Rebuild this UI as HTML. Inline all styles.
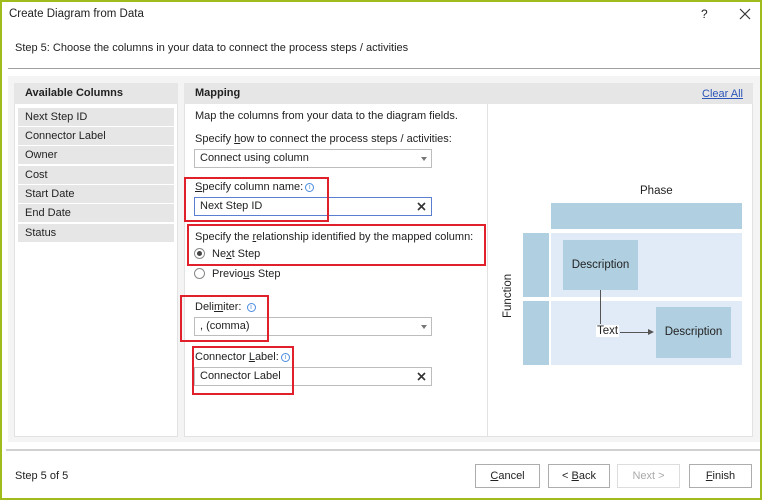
<!DOCTYPE html>
<html><head><style>
*{margin:0;padding:0;box-sizing:border-box}
body{width:768px;height:501px;background:#fff;font-family:"Liberation Sans",sans-serif;font-size:11px;color:#222;position:relative;overflow:hidden}
.a{position:absolute}
.win{left:0;top:0;width:762px;height:500px;border:2px solid #9fbb1c;background:#fff}
.item{position:absolute;left:18px;width:156px;height:18px;background:#e6e6e6;padding-left:7px;line-height:18px}
.hdr{background:#e6e6e6;font-weight:bold;height:21px;line-height:21px}
.inp{position:absolute;background:#fff;border:1px solid #bdbdbd;height:19px;line-height:17px;padding-left:5px}
.red{position:absolute;border:2px solid #e0202a}
.btn{position:absolute;top:464px;height:24px;border:1px solid #adadad;background:#fff;text-align:center;line-height:22px}
.dd{position:absolute;right:4px;top:7px;border-left:3px solid transparent;border-right:3px solid transparent;border-top:4px solid #777}
.x{position:absolute;right:5px;top:4px}
.info{display:inline-block;width:9px;height:9px;border:1px solid #4a8be0;border-radius:50%;font-size:7px;line-height:7px;text-align:center;color:#4a8be0;vertical-align:1px;margin-left:2px}
.bx{position:absolute;background:#b0cfe0}
.lt{position:absolute;background:#e1ebf8}
</style></head><body>
<div class="a win"></div>
<div class="a" style="left:9px;top:8px;font-size:11.5px">Create Diagram from Data</div>
<div class="a" style="left:701px;top:7px;font-size:12px">?</div>
<svg class="a" style="left:739px;top:8px" width="12" height="12"><path d="M1 1L11 11M11 1L1 11" stroke="#333" stroke-width="1.2"/></svg>
<div class="a" style="left:15px;top:42px">Step 5: Choose the columns in your data to connect the process steps / activities</div>
<div class="a" style="left:8px;top:68px;width:752px;height:1px;background:#a0a0a0"></div>
<div class="a" style="left:8px;top:76px;width:752px;height:366px;background:#f4f4f4"></div>
<div class="a" style="left:14px;top:83px;width:164px;height:354px;background:#fff;border:1px solid #e2e2e2"></div>
<div class="a hdr" style="left:14px;top:83px;width:164px;padding-left:11px">Available Columns</div>
<div class="item" style="top:108px">Next Step ID</div>
<div class="item" style="top:127px">Connector Label</div>
<div class="item" style="top:146px">Owner</div>
<div class="item" style="top:166px">Cost</div>
<div class="item" style="top:185px">Start Date</div>
<div class="item" style="top:204px">End Date</div>
<div class="item" style="top:224px">Status</div>
<div class="a" style="left:184px;top:83px;width:569px;height:354px;background:#fff;border:1px solid #e2e2e2"></div>
<div class="a hdr" style="left:184px;top:83px;width:569px;padding-left:11px">Mapping</div>
<div class="a" style="left:702px;top:88px;color:#2b55b8;text-decoration:underline">Clear All</div>
<div class="a" style="left:487px;top:104px;width:1px;height:333px;background:#e2e2e2"></div>
<div class="a" style="left:195px;top:110px">Map the columns from your data to the diagram fields.</div>
<div class="a" style="left:195px;top:133px">Specify <u>h</u>ow to connect the process steps / activities:</div>
<div class="inp" style="left:194px;top:149px;width:238px">Connect using column<span class="dd"></span></div>
<div class="a" style="left:195px;top:181px"><u>S</u>pecify column name:<span class="info">i</span></div>
<div class="inp" style="left:194px;top:197px;width:238px;border-color:#5a7fd0">Next Step ID<svg class="x" width="9" height="9"><path d="M1 1L8 8M8 1L1 8" stroke="#333" stroke-width="1.6"/></svg></div>
<div class="red" style="left:184px;top:177px;width:145px;height:45px"></div>
<div class="a" style="left:195px;top:231px">Specify the <u>r</u>elationship identified by the mapped column:</div>
<div class="a" style="left:194px;top:248px;width:11px;height:11px;border:1px solid #888;border-radius:50%"><div style="margin:2px;width:5px;height:5px;border-radius:50%;background:#444"></div></div>
<div class="a" style="left:212px;top:248px">Ne<u>x</u>t Step</div>
<div class="red" style="left:187px;top:224px;width:299px;height:42px"></div>
<div class="a" style="left:194px;top:268px;width:11px;height:11px;border:1px solid #888;border-radius:50%"></div>
<div class="a" style="left:212px;top:268px">Previo<u>u</u>s Step</div>
<div class="a" style="left:195px;top:301px">Deli<u>m</u>iter: <span class="info">i</span></div>
<div class="inp" style="left:194px;top:317px;width:238px">, (comma)<span class="dd"></span></div>
<div class="red" style="left:180px;top:295px;width:89px;height:47px"></div>
<div class="a" style="left:195px;top:351px">Connector <u>L</u>abel:<span class="info">i</span></div>
<div class="inp" style="left:194px;top:367px;width:238px">Connector Label<svg class="x" width="9" height="9"><path d="M1 1L8 8M8 1L1 8" stroke="#333" stroke-width="1.6"/></svg></div>
<div class="red" style="left:192px;top:346px;width:102px;height:49px"></div>
<div class="a" style="left:640px;top:185px;font-size:11.5px">Phase</div>
<div class="bx" style="left:551px;top:203px;width:191px;height:26px"></div>
<div class="bx" style="left:523px;top:233px;width:26px;height:64px"></div>
<div class="bx" style="left:523px;top:301px;width:26px;height:64px"></div>
<div class="lt" style="left:551px;top:233px;width:191px;height:64px"></div>
<div class="lt" style="left:551px;top:301px;width:191px;height:64px"></div>
<div class="a" style="left:502px;top:318px;transform:rotate(-90deg);transform-origin:0 0;white-space:nowrap;font-size:11.5px">Function</div>
<div class="bx" style="left:563px;top:240px;width:75px;height:50px;text-align:center;line-height:50px;font-size:11.5px">Description</div>
<div class="bx" style="left:656px;top:307px;width:75px;height:51px;text-align:center;line-height:51px;font-size:11.5px">Description</div>
<div class="a" style="left:600px;top:290px;width:1px;height:34px;background:#555"></div>
<div class="a" style="left:596px;top:325px;background:#fff;padding:0 1px;font-size:11.5px">Text</div>
<div class="a" style="left:620px;top:332px;width:29px;height:1px;background:#555"></div>
<div class="a" style="left:648px;top:329px;border-top:3px solid transparent;border-bottom:3px solid transparent;border-left:6px solid #555"></div>
<div class="a" style="left:6px;top:449px;width:754px;height:2px;background:#d0d0d0"></div>
<div class="a" style="left:15px;top:470px">Step 5 of 5</div>
<div class="btn" style="left:475px;width:65px"><u>C</u>ancel</div>
<div class="btn" style="left:548px;width:62px">&lt; <u>B</u>ack</div>
<div class="btn" style="left:617px;width:63px;color:#aaa;border-color:#ddd">Next &gt;</div>
<div class="btn" style="left:689px;width:63px"><u>F</u>inish</div>
</body></html>
